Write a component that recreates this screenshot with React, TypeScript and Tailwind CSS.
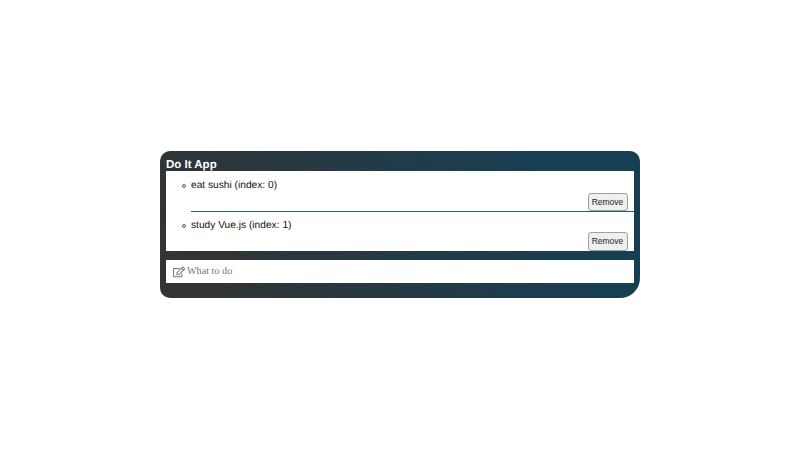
import { FaRegEdit } from "react-icons/fa";

const todos = ["eat sushi", "study Vue.js"];

export default function App() {
  return (
    <div className="flex h-screen w-full items-center justify-center bg-white pb-[1px] font-['Liberation_Sans',sans-serif] [text-rendering:geometricPrecision]">
      <div className="w-[480px] rounded-tl-[10px] rounded-tr-[10px] rounded-bl-[10px] rounded-br-[20px] bg-[linear-gradient(62deg,#333333_3%,#183e52_80%)] px-[6px] pb-[15.5px] pt-[6px]">
        <h1 className="h-[14px] text-[11.5px] font-bold leading-[17px] text-white">Do It App</h1>
        <ul className="bg-white pl-[25px]">
          {todos.map((todo, index) => (
            <li
              key={todo}
              className="relative h-[41px] border-b border-[#2f5a6e] pt-[8px] text-[10.2px] leading-[14px] text-[#111111] last:h-[38.5px] last:border-b-0 last:pt-[6.5px]"
            >
              <span className="relative block">
                <span className="absolute left-[-9.5px] top-[5px] size-[4px] rounded-full border border-[#555555]" />
                {todo} (index: {index})
              </span>
              <button className="absolute bottom-0 right-[6.5px] h-[18.5px] w-[40px] rounded-[3px] border-[1.5px] border-[#a0a0a0] bg-[#efefef] text-[8.5px] leading-none text-[#222222]">
                Remove
              </button>
            </li>
          ))}
        </ul>
        <div className="mt-[9.5px] flex h-[22.5px] items-center gap-[2px] bg-white pl-[7px] pt-[1px] font-['Liberation_Serif',serif] text-[10.2px] text-[#757575]">
          <FaRegEdit className="size-[12px]" />
          <span>What to do</span>
        </div>
      </div>
    </div>
  );
}
